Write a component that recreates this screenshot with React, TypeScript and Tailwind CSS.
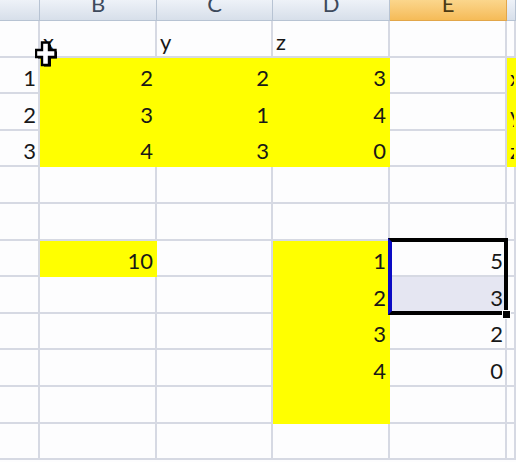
import React from "react";

type Fill = "yellow" | "sel" | undefined;
type Cell = { t?: string; r?: boolean; fill?: Fill };

const widths = ["w-[40px]", "w-[117px]", "w-[116px]", "w-[117px]", "w-[117px]", "flex-1"];
const heights = ["h-[37px]", "h-[36px]", "h-[37px]", "h-[36px]", "h-[37px]", "h-[37px]", "h-[36px]", "h-[37px]", "h-[36px]", "h-[37px]", "h-[37px]", "h-[36px]"];

const Y: Fill = "yellow";

// rows 1..12, columns A..F
const rows: Cell[][] = [
  [{}, { t: "x" }, { t: "y" }, { t: "z" }, {}, {}],
  [{ t: "1", r: true }, { t: "2", r: true, fill: Y }, { t: "2", r: true, fill: Y }, { t: "3", r: true, fill: Y }, {}, { t: "x", fill: Y }],
  [{ t: "2", r: true }, { t: "3", r: true, fill: Y }, { t: "1", r: true, fill: Y }, { t: "4", r: true, fill: Y }, {}, { t: "y", fill: Y }],
  [{ t: "3", r: true }, { t: "4", r: true, fill: Y }, { t: "3", r: true, fill: Y }, { t: "0", r: true, fill: Y }, {}, { t: "z", fill: Y }],
  [{}, {}, {}, {}, {}, {}],
  [{}, {}, {}, {}, {}, {}],
  [{}, { t: "10", r: true, fill: Y }, {}, { t: "1", r: true, fill: Y }, { t: "5", r: true }, {}],
  [{}, {}, {}, { t: "2", r: true, fill: Y }, { t: "3", r: true, fill: "sel" }, {}],
  [{}, {}, {}, { t: "3", r: true, fill: Y }, { t: "2", r: true }, {}],
  [{}, {}, {}, { t: "4", r: true, fill: Y }, { t: "0", r: true }, {}],
  [{}, {}, {}, { fill: Y }, {}, {}],
  [{}, {}, {}, {}, {}, {}],
];

const headers = ["", "B", "C", "D", "E", ""];

function cx(...c: Array<string | false | undefined>) {
  return c.filter(Boolean).join(" ");
}

// the mouse pointer (white cross) resting over B1
function CursorCross() {
  return (
    <svg className="absolute left-[35px] top-[41px]" width="23" height="27" viewBox="0 0 23 27">
      <path d="M8 2.5h7v7h6v7h-6v8h-7v-8h-6v-7h6z" fill="#000" transform="translate(1 1)" />
      <path d="M7 1.5h7v7.5h6.5v7h-6.5v8h-7v-8h-6v-7h6z" fill="#fff" stroke="#000" strokeWidth="2.4" />
    </svg>
  );
}

export default function App() {
  return (
    <div className="relative w-[516px] h-[462px] overflow-hidden bg-[#fdfdfe] text-[#181818] font-['Lato','Liberation_Sans',sans-serif] text-[22px]">
      {/* column headers */}
      <div className="flex h-[21px]">
        {headers.map((h, i) => (
          <div
            key={i}
            className={cx(
              widths[i],
              "h-full overflow-hidden flex items-end justify-center pb-[5px] leading-none border-b border-r",
              i === 4
                ? "bg-gradient-to-b from-[#fbd68c] to-[#f5bb57] border-[#e2a64a] text-[#4b3a14]"
                : "bg-gradient-to-b from-[#eef2f8] to-[#d7dfea] border-[#b7c3d3] text-[#3e4a5c]"
            )}
          >
            {h}
          </div>
        ))}
      </div>

      {rows.map((row, ri) => (
        <div key={ri} className={cx("flex", heights[ri])}>
          {row.map((c, ci) => (
            <div
              key={ci}
              className={cx(
                widths[ci],
                "h-full flex items-end leading-none pb-[3px] border-b-2 border-r-2 whitespace-nowrap overflow-hidden",
                c.r ? "justify-end pr-[2px]" : "justify-start pl-[3px]",
                c.fill === "yellow"
                  ? "bg-[#ffff00] border-[#ffff00]"
                  : c.fill === "sel"
                  ? "bg-[#e5e6f2] border-[#d6d9e3]"
                  : "border-[#d6d9e3]"
              )}
            >
              {c.t}
            </div>
          ))}
        </div>
      ))}

      {/* selection E7:E8 */}
      <div className="absolute left-[388px] top-[238px] w-[120px] h-[77px] border-4 border-black border-l-[#0b0bc4]" />
      <div className="absolute left-[502px] top-[310px] w-[9px] h-[9px] bg-black border border-[#fdfdfe]" />

      <CursorCross />
    </div>
  );
}
